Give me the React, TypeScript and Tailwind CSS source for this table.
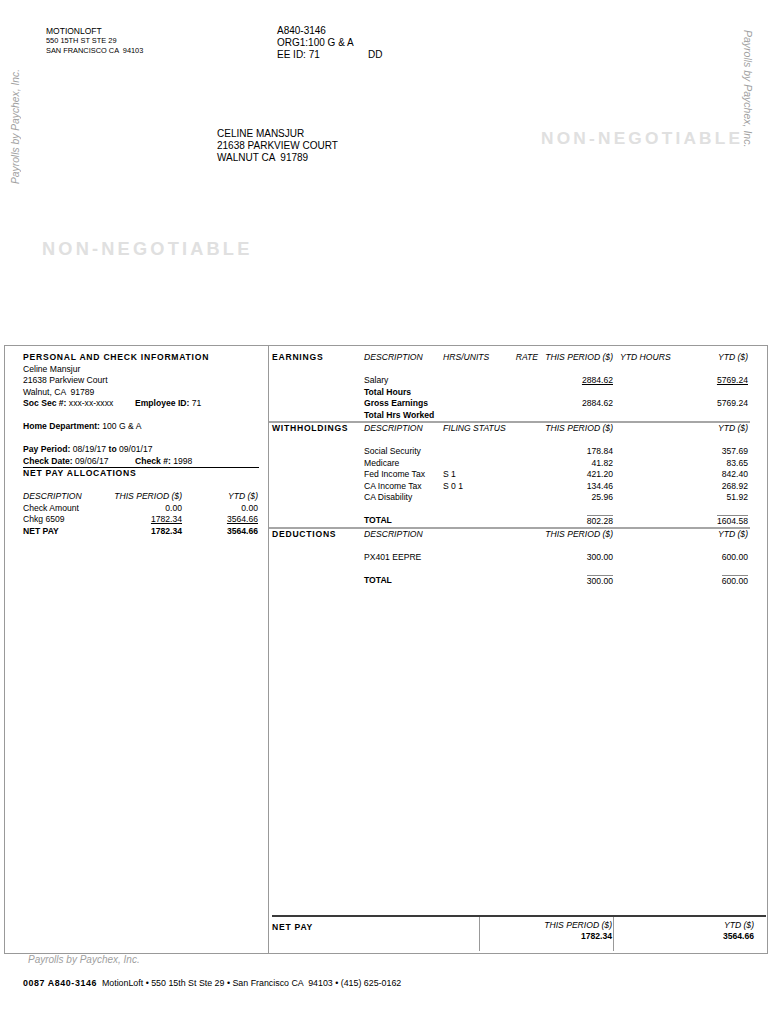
import type { ReactNode } from 'react';

const LABEL = 'font-bold not-italic text-[8.6px] tracking-[0.75px] whitespace-nowrap';

type LineProps = {
  label?: string;
  desc?: ReactNode;
  mid?: ReactNode;
  period?: ReactNode;
  hours?: ReactNode;
  ytd?: ReactNode;
  head?: boolean;
  bold?: boolean;
};

// one row of the right-hand earnings / withholdings / deductions table
const Line = ({ label, desc, mid, period, hours, ytd, head, bold }: LineProps) => (
  <div
    className={`grid grid-cols-[92px_79px_95px_75px_67px_68px] h-[11.5px] ${head ? 'italic' : ''} ${bold ? 'font-bold' : ''}`}
  >
    <div className={LABEL}>{label}</div>
    <div className="whitespace-nowrap">{desc}</div>
    <div className="whitespace-nowrap">{mid}</div>
    <div className="text-right whitespace-nowrap">{period}</div>
    <div className="pl-[7px] whitespace-nowrap">{hours}</div>
    <div className="text-right whitespace-nowrap">{ytd}</div>
  </div>
);

const Blank = () => <div className="h-[11.5px]" />;

const Total = ({ value }: { value: string }) => (
  <span className="inline-block border-t border-[#8a8a8a] leading-[10.5px] font-normal">{value}</span>
);

const withholdings = [
  { desc: 'Social Security', status: '', period: '178.84', ytd: '357.69' },
  { desc: 'Medicare', status: '', period: '41.82', ytd: '83.65' },
  { desc: 'Fed Income Tax', status: 'S 1', period: '421.20', ytd: '842.40' },
  { desc: 'CA Income Tax', status: 'S 0 1', period: '134.46', ytd: '268.92' },
  { desc: 'CA Disability', status: '', period: '25.96', ytd: '51.92' },
];

const Watermark = ({ className }: { className: string }) => (
  <div className={`font-bold tracking-[3.2px] text-[#e0e0e0] whitespace-nowrap ${className}`}>NON-NEGOTIABLE</div>
);

const App = () => {
  return (
    <div className="relative w-[770px] h-[1024px] overflow-hidden bg-white text-black font-['Liberation_Sans',Arial,sans-serif]">
      {/* Check stub header */}
      <header className="relative h-[345px]">
        <div className="flex pt-[25px] pl-[46px]">
          <div className="w-[231px] pt-[1px]">
            <div className="text-[8.5px] leading-[10px]">MOTIONLOFT</div>
            <div className="text-[7.4px] leading-[9.5px]">550 15TH ST STE 29</div>
            <div className="text-[7.4px] leading-[9.5px] whitespace-pre">SAN FRANCISCO CA  94103</div>
          </div>
          <div className="text-[10px] leading-[12px]">
            <div>A840-3146</div>
            <div>ORG1:100 G &amp; A</div>
            <div className="flex">
              <span className="w-[91px]">EE ID: 71</span>
              <span>DD</span>
            </div>
          </div>
        </div>

        <div className="flex items-start mt-[67px]">
          <div className="ml-[217px] w-[324px] text-[10px] leading-[12px]">
            <div>CELINE MANSJUR</div>
            <div>21638 PARKVIEW COURT</div>
            <div className="whitespace-pre">WALNUT CA  91789</div>
          </div>
          <Watermark className="text-[17.3px] leading-[18px] mt-[1px]" />
        </div>

        <Watermark className="pl-[42px] mt-[75px] text-[18.2px] leading-[20px]" />

        <div className="absolute left-[10px] top-[69px] [writing-mode:vertical-rl] rotate-180 italic text-[10.3px] leading-[12px] text-[#a0a0a0] whitespace-nowrap">
          Payrolls by Paychex, Inc.
        </div>
        <div className="absolute left-[742px] top-[30px] [writing-mode:vertical-rl] italic text-[10.5px] leading-[12px] text-[#a0a0a0] whitespace-nowrap">
          Payrolls by Paychex, Inc.
        </div>
      </header>

      {/* Stub body */}
      <section className="ml-[4px] w-[764px] h-[609px] border border-[#999] flex text-[8.6px] leading-[11.5px]">
        {/* Personal and check information */}
        <div className="w-[264px] shrink-0 border-r border-[#999] pl-[18px] pr-[9px] pt-[6px]">
          <div className={LABEL}>PERSONAL AND CHECK INFORMATION</div>
          <div>Celine Mansjur</div>
          <div>21638 Parkview Court</div>
          <div className="whitespace-pre">Walnut, CA  91789</div>
          <div className="flex">
            <span className="w-[112px]">
              <b>Soc Sec #:</b> xxx-xx-xxxx
            </span>
            <span>
              <b>Employee ID:</b> 71
            </span>
          </div>
          <Blank />
          <div>
            <b>Home Department:</b> 100 G &amp; A
          </div>
          <Blank />
          <div>
            <b>Pay Period:</b> 08/19/17 <b>to</b> 09/01/17
          </div>
          <div className="flex border-b border-black">
            <span className="w-[112px]">
              <b>Check Date:</b> 09/06/17
            </span>
            <span>
              <b>Check #:</b> 1998
            </span>
          </div>
          <div className={LABEL}>NET PAY ALLOCATIONS</div>
          <Blank />
          <div className="grid grid-cols-[83px_76px_76px]">
            <div className="italic">DESCRIPTION</div>
            <div className="italic text-right">THIS PERIOD ($)</div>
            <div className="italic text-right">YTD ($)</div>
            <div>Check Amount</div>
            <div className="text-right">0.00</div>
            <div className="text-right">0.00</div>
            <div>Chkg 6509</div>
            <div className="text-right">
              <span className="underline">1782.34</span>
            </div>
            <div className="text-right">
              <span className="underline">3564.66</span>
            </div>
            <div className="font-bold">NET PAY</div>
            <div className="font-bold text-right">1782.34</div>
            <div className="font-bold text-right">3564.66</div>
          </div>
        </div>

        {/* Earnings, withholdings, deductions */}
        <div className="flex-1 flex flex-col pt-[6px]">
          <div className="mr-[17px] pl-[3px] pr-[2px] border-b-2 border-[#a6a6a6]">
            <Line
              label="EARNINGS"
              head
              desc="DESCRIPTION"
              mid={
                <div className="flex justify-between">
                  <span>HRS/UNITS</span>
                  <span>RATE</span>
                </div>
              }
              period="THIS PERIOD ($)"
              hours="YTD HOURS"
              ytd="YTD ($)"
            />
            <Blank />
            <Line
              desc="Salary"
              period={<span className="underline">2884.62</span>}
              ytd={<span className="underline">5769.24</span>}
            />
            <Line desc={<b>Total Hours</b>} />
            <Line desc={<b>Gross Earnings</b>} period="2884.62" ytd="5769.24" />
            <Line desc={<b>Total Hrs Worked</b>} />
          </div>

          <div className="mr-[17px] pl-[3px] pr-[2px] border-b-2 border-[#a6a6a6]">
            <Line label="WITHHOLDINGS" head desc="DESCRIPTION" mid="FILING STATUS" period="THIS PERIOD ($)" ytd="YTD ($)" />
            <Blank />
            {withholdings.map((w) => (
              <Line key={w.desc} desc={w.desc} mid={w.status} period={w.period} ytd={w.ytd} />
            ))}
            <Blank />
            <Line desc={<b>TOTAL</b>} period={<Total value="802.28" />} ytd={<Total value="1604.58" />} />
          </div>

          <div className="mr-[17px] pl-[3px] pr-[2px]">
            <Line label="DEDUCTIONS" head desc="DESCRIPTION" period="THIS PERIOD ($)" ytd="YTD ($)" />
            <Blank />
            <Line desc="PX401 EEPRE" period="300.00" ytd="600.00" />
            <Blank />
            <Line desc={<b>TOTAL</b>} period={<Total value="300.00" />} ytd={<Total value="600.00" />} />
          </div>

          {/* Net pay */}
          <div className="mt-auto ml-[3px] mr-[1px] h-[38px] border-t-2 border-[#3a3a3a] grid grid-cols-[208px_134px_1fr] pb-[2px]">
            <div className={`${LABEL} border-r border-[#999] pt-[5px]`}>NET PAY</div>
            <div className="border-r border-[#999] text-right pr-[1px] pt-[3px] leading-[11px]">
              <div className="italic">THIS PERIOD ($)</div>
              <div className="font-bold">1782.34</div>
            </div>
            <div className="text-right pr-[12px] pt-[3px] leading-[11px]">
              <div className="italic">YTD ($)</div>
              <div className="font-bold">3564.66</div>
            </div>
          </div>
        </div>
      </section>

      {/* Footer */}
      <footer>
        <div className="pl-[28px] italic text-[10px] leading-[12px] text-[#a0a0a0]">Payrolls by Paychex, Inc.</div>
        <div className="pl-[23px] mt-[11px] text-[8.85px] leading-[12px] whitespace-pre">
          <b className="tracking-[0.6px]">0087 A840-3146</b>  MotionLoft • 550 15th St Ste 29 • San Francisco CA  94103 • (415) 625-0162
        </div>
      </footer>
    </div>
  );
};

export default App;
